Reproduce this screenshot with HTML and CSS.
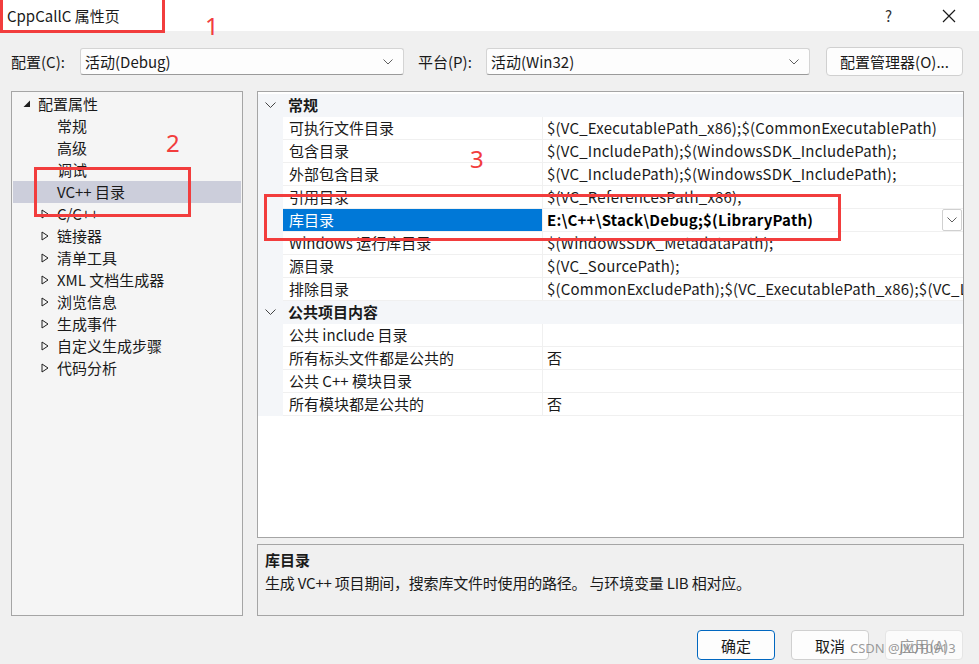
FILE: index.html
```html
<!DOCTYPE html>
<html>
<head>
<meta charset="utf-8">
<title>CppCallC 属性页</title>
<link rel="stylesheet" href="styles.css">
</head>
<body>
    <div class="window">
        <!-- ===== title bar ===== -->
        <div class="titlebar">
            <div class="title">CppCallC 属性页</div>
            <div class="win-btns">
                <span class="help">?</span>
                <svg class="close" width="14" height="14" viewBox="0 0 14 14">
                    <path d="M1 1 L13 13 M13 1 L1 13" stroke="#1a1a1a" stroke-width="1.2" fill="none"/>
                </svg>
            </div>
        </div>

        <!-- ===== config row ===== -->
        <div class="config-row">
            <label class="lbl">配置(C):</label>
            <div class="select">
                <span>活动(Debug)</span>
                <svg width="10" height="6" viewBox="0 0 10 6"><path d="M0.5 0.5 L5 5 L9.5 0.5" stroke="#606060" fill="none"/></svg>
            </div>
            <label class="lbl lbl-platform">平台(P):</label>
            <div class="select">
                <span>活动(Win32)</span>
                <svg width="10" height="6" viewBox="0 0 10 6"><path d="M0.5 0.5 L5 5 L9.5 0.5" stroke="#606060" fill="none"/></svg>
            </div>
            <button class="btn btn-manager">配置管理器(O)...</button>
        </div>

        <!-- ===== main ===== -->
        <div class="main">
            <div class="tree">
                <div class="node root">
                    <svg class="tri" width="8" height="8" viewBox="0 0 8 8"><polygon points="7,0.5 7,7 0.5,7" fill="#1e1e1e"/></svg>
                    <span>配置属性</span>
                </div>
                <div class="node leaf">常规</div>
                <div class="node leaf">高级</div>
                <div class="node leaf">调试</div>
                <div class="node leaf selected">VC++ 目录</div>
                <div class="node child"><svg class="tri" width="8" height="10" viewBox="0 0 8 10"><polygon points="1,1 7,5 1,9" fill="none" stroke="#1e1e1e"/></svg><span>C/C++</span></div>
                <div class="node child"><svg class="tri" width="8" height="10" viewBox="0 0 8 10"><polygon points="1,1 7,5 1,9" fill="none" stroke="#1e1e1e"/></svg><span>链接器</span></div>
                <div class="node child"><svg class="tri" width="8" height="10" viewBox="0 0 8 10"><polygon points="1,1 7,5 1,9" fill="none" stroke="#1e1e1e"/></svg><span>清单工具</span></div>
                <div class="node child"><svg class="tri" width="8" height="10" viewBox="0 0 8 10"><polygon points="1,1 7,5 1,9" fill="none" stroke="#1e1e1e"/></svg><span>XML 文档生成器</span></div>
                <div class="node child"><svg class="tri" width="8" height="10" viewBox="0 0 8 10"><polygon points="1,1 7,5 1,9" fill="none" stroke="#1e1e1e"/></svg><span>浏览信息</span></div>
                <div class="node child"><svg class="tri" width="8" height="10" viewBox="0 0 8 10"><polygon points="1,1 7,5 1,9" fill="none" stroke="#1e1e1e"/></svg><span>生成事件</span></div>
                <div class="node child"><svg class="tri" width="8" height="10" viewBox="0 0 8 10"><polygon points="1,1 7,5 1,9" fill="none" stroke="#1e1e1e"/></svg><span>自定义生成步骤</span></div>
                <div class="node child"><svg class="tri" width="8" height="10" viewBox="0 0 8 10"><polygon points="1,1 7,5 1,9" fill="none" stroke="#1e1e1e"/></svg><span>代码分析</span></div>
            </div>

            <div class="right">
                <div class="grid">
                    <div class="cat">
                        <div class="gutter"><svg width="11" height="7" viewBox="0 0 11 7"><path d="M0.5 0.5 L5.5 5.5 L10.5 0.5" stroke="#444" fill="none"/></svg></div>
                        <div class="cat-name">常规</div>
                    </div>
                    <div class="row"><div class="gutter"></div><div class="name">可执行文件目录</div><div class="value">$(VC_ExecutablePath_x86);$(CommonExecutablePath)</div></div>
                    <div class="row"><div class="gutter"></div><div class="name">包含目录</div><div class="value">$(VC_IncludePath);$(WindowsSDK_IncludePath);</div></div>
                    <div class="row"><div class="gutter"></div><div class="name">外部包含目录</div><div class="value">$(VC_IncludePath);$(WindowsSDK_IncludePath);</div></div>
                    <div class="row"><div class="gutter"></div><div class="name">引用目录</div><div class="value">$(VC_ReferencesPath_x86);</div></div>
                    <div class="row active">
                        <div class="gutter"></div>
                        <div class="name">库目录</div>
                        <div class="value">
                            <span>E:\C++\Stack\Debug;$(LibraryPath)</span>
                            <span class="drop"><svg width="10" height="6" viewBox="0 0 10 6"><path d="M0.5 0.5 L5 5 L9.5 0.5" stroke="#606060" fill="none"/></svg></span>
                        </div>
                    </div>
                    <div class="row"><div class="gutter"></div><div class="name">Windows 运行库目录</div><div class="value">$(WindowsSDK_MetadataPath);</div></div>
                    <div class="row"><div class="gutter"></div><div class="name">源目录</div><div class="value">$(VC_SourcePath);</div></div>
                    <div class="row"><div class="gutter"></div><div class="name">排除目录</div><div class="value">$(CommonExcludePath);$(VC_ExecutablePath_x86);$(VC_L</div></div>
                    <div class="cat">
                        <div class="gutter"><svg width="11" height="7" viewBox="0 0 11 7"><path d="M0.5 0.5 L5.5 5.5 L10.5 0.5" stroke="#444" fill="none"/></svg></div>
                        <div class="cat-name">公共项目内容</div>
                    </div>
                    <div class="row"><div class="gutter"></div><div class="name">公共 include 目录</div><div class="value"></div></div>
                    <div class="row"><div class="gutter"></div><div class="name">所有标头文件都是公共的</div><div class="value">否</div></div>
                    <div class="row"><div class="gutter"></div><div class="name">公共 C++ 模块目录</div><div class="value"></div></div>
                    <div class="row"><div class="gutter"></div><div class="name">所有模块都是公共的</div><div class="value">否</div></div>
                </div>
                <div class="desc">
                    <div class="desc-title">库目录</div>
                    <div class="desc-text">生成 VC++ 项目期间，搜索库文件时使用的路径。 与环境变量 LIB 相对应。</div>
                </div>
            </div>
        </div>

        <!-- ===== footer ===== -->
        <div class="footer">
            <button class="btn btn-ok">确定</button>
            <button class="btn">取消</button>
            <button class="btn btn-disabled">应用(A)</button>
        </div>

        <!-- annotations drawn over the screenshot -->
        <div class="mark-box box-1"></div>
        <div class="mark-box box-2"></div>
        <div class="mark-box box-3"></div>
        <span class="mark num-1">1</span>
        <span class="mark num-2">2</span>
        <span class="mark num-3">3</span>
        <span class="watermark">CSDN @JX010913</span>
    </div>
</body>
</html>
```

FILE: styles.css
```css
* {
    margin: 0;
    padding: 0;
    box-sizing: border-box;
}

body {
    background-color: #f0f0f0;
    font-family: "Noto Sans CJK SC", "Noto Sans", sans-serif;
    font-size: 15px;
    color: #1a1a1a;
    overflow: hidden;
}

.window {
    position: relative;
    width: 979px;
    height: 664px;
}

/* title bar */
.titlebar {
    display: flex;
    align-items: center;
    justify-content: space-between;
    height: 31px;
    background-color: #fff;
}

.title {
    padding-left: 7px;
    line-height: 31px;
}

.win-btns {
    display: flex;
    align-items: center;
    gap: 50px;
    padding-right: 23px;
}

.help {
    font-size: 15px;
    color: #333;
}

/* config row */
.config-row {
    display: flex;
    align-items: center;
    height: 29px;
    margin-top: 16px;
    padding-left: 11px;
}

.lbl {
    width: 69px;
}

.lbl-platform {
    width: 68px;
    margin-left: 14px;
}

.select {
    display: flex;
    align-items: center;
    justify-content: space-between;
    width: 324px;
    height: 27px;
    padding: 0 10px 0 4px;
    background-color: #fdfdfd;
    border: 1px solid #d4d4d4;
    border-bottom-color: #9a9a9a;
    border-radius: 3px;
}

.btn {
    height: 30px;
    width: 78px;
    font-family: inherit;
    font-size: 15px;
    color: #1a1a1a;
    background-color: #fdfdfd;
    border: 1px solid #d0d0d0;
    border-radius: 4px;
}

.btn-manager {
    width: 137px;
    height: 29px;
    margin-left: 16px;
}

/* main area */
.main {
    display: flex;
    margin-top: 15px;
    padding-left: 11px;
    gap: 14px;
}

.tree {
    width: 232px;
    height: 525px;
    padding-top: 1px;
    background-color: #f5f5f5;
    border: 1px solid #a5a5a5;
}

.node {
    display: flex;
    align-items: center;
    height: 22px;
    line-height: 22px;
    margin: 0 1px;
}

.root {
    padding-left: 10px;
}

.root .tri {
    margin-right: 7px;
}

.leaf {
    padding-left: 44px;
}

.child {
    padding-left: 28px;
}

.child .tri {
    margin-right: 8px;
}

.selected {
    background-color: #cccedb;
}

.right {
    display: flex;
    flex-direction: column;
    gap: 6px;
    width: 707px;
}

.grid {
    height: 447px;
    padding-top: 2px;
    background-color: #fff;
    border: 1px solid #a5a5a5;
    overflow: hidden;
}

.cat,
.row {
    display: flex;
    height: 23px;
    line-height: 22px;
}

.cat {
    background-color: #f4f6f9;
}

.gutter {
    flex: 0 0 25px;
    display: flex;
    align-items: center;
    justify-content: center;
    background-color: #f4f6f9;
}

.cat-name {
    padding-left: 5px;
    font-weight: bold;
}

.row .name {
    flex: 0 0 260px;
    padding-left: 6px;
    border-right: 1px solid #f0f0f0;
    border-bottom: 1px solid #f0f0f0;
    white-space: nowrap;
}

.row .value {
    flex: 1;
    display: flex;
    justify-content: space-between;
    padding-left: 4px;
    border-bottom: 1px solid #f0f0f0;
    letter-spacing: 0.2px;
    white-space: nowrap;
    overflow: hidden;
}

.row.active .name {
    background-color: #0078d7;
    color: #fff;
}

.row.active .value {
    font-weight: bold;
    color: #000;
}

.drop {
    display: flex;
    align-items: center;
    justify-content: center;
    width: 20px;
    height: 22px;
    margin-right: 1px;
    background-color: #fff;
    border: 1px solid #d0d0d0;
    border-radius: 2px;
}

.desc {
    height: 72px;
    padding: 4px 7px;
    border: 1px solid #a5a5a5;
}

.desc-title {
    font-weight: bold;
    line-height: 22px;
}

.desc-text {
    line-height: 24px;
    letter-spacing: -0.2px;
}

/* footer */
.footer {
    display: flex;
    justify-content: flex-end;
    gap: 16px;
    margin-top: 14px;
    padding-right: 16px;
}

.btn-ok {
    border: 1px solid #0067c0;
}

.btn-disabled {
    color: #9d9d9d;
    background-color: #fbfbfb;
    border-color: #e5e5e5;
}

/* red annotations */
.mark-box {
    position: absolute;
    border: 3px solid #f23d3d;
}

.box-1 {
    left: 0;
    top: -3px;
    width: 165px;
    height: 36px;
}

.box-2 {
    left: 34px;
    top: 167px;
    width: 157px;
    height: 50px;
}

.box-3 {
    left: 264px;
    top: 194px;
    width: 577px;
    height: 47px;
}

.mark {
    position: absolute;
    font-family: "Noto Sans", sans-serif;
    font-size: 24px;
    color: #f23d3d;
    line-height: 1;
}

.num-1 {
    left: 205px;
    top: 14px;
}

.num-2 {
    left: 166px;
    top: 131px;
}

.num-3 {
    left: 470px;
    top: 147px;
}

.watermark {
    position: absolute;
    left: 850px;
    top: 639px;
    font-family: "Noto Sans", sans-serif;
    font-size: 13px;
    color: rgba(130, 130, 130, 0.8);
}
```
